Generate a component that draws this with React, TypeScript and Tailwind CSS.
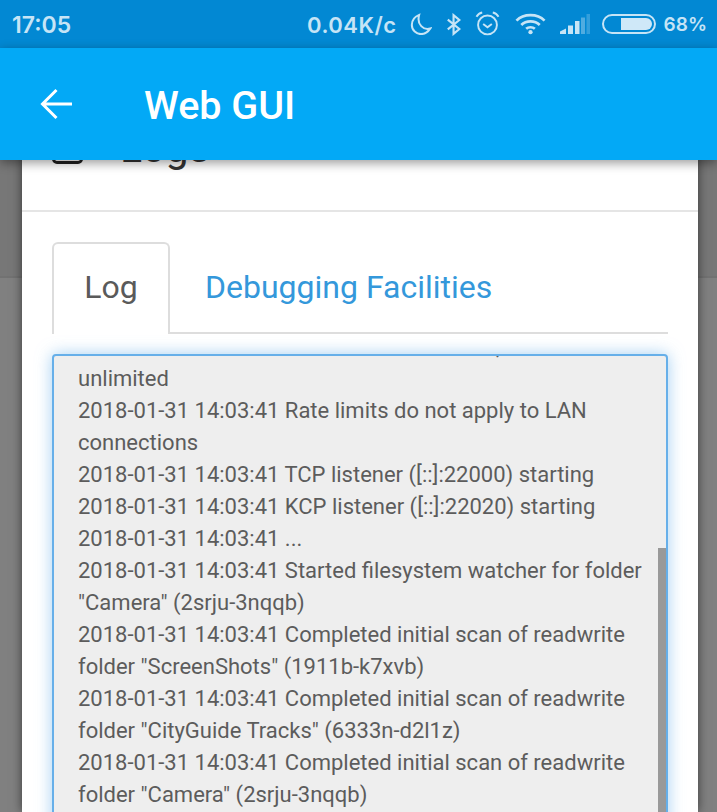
import React from 'react';

const logLines = [
  '2018-01-31 14:03:41 Send rate is unlimited, receive rate is unlimited',
  '2018-01-31 14:03:41 Rate limits do not apply to LAN connections',
  '2018-01-31 14:03:41 TCP listener ([::]:22000) starting',
  '2018-01-31 14:03:41 KCP listener ([::]:22020) starting',
  '2018-01-31 14:03:41 ...',
  '2018-01-31 14:03:41 Started filesystem watcher for folder "Camera" (2srju-3nqqb)',
  '2018-01-31 14:03:41 Completed initial scan of readwrite folder "ScreenShots" (1911b-k7xvb)',
  '2018-01-31 14:03:41 Completed initial scan of readwrite folder "CityGuide Tracks" (6333n-d2l1z)',
  '2018-01-31 14:03:41 Completed initial scan of readwrite folder "Camera" (2srju-3nqqb)',
  '2018-01-31 14:03:41 Device 5TS7LC7 client is "syncthing v0.14.43"',
];

const StatusIcons = () => (
  <div className="flex items-center text-[#c6e4f6]">
    <svg width="22" height="22" viewBox="0 0 24 24" fill="none" stroke="currentColor" strokeWidth="2.2" className="ml-[13px]">
      <path d="M10 2 C5 4 2 8 2 13 C2 19 7 23 12 23 C17 23 20 20 22 17 C15 19 7 13 10 2 Z" />
    </svg>
    <svg width="16" height="23" viewBox="0 0 18 24" fill="none" stroke="currentColor" strokeWidth="2.4" className="ml-[14px]">
      <path d="M2 6.5 L15 17 L8.5 22.5 V1.5 L15 7 L2 17.5" />
    </svg>
    <svg width="25" height="25" viewBox="0 0 26 26" fill="none" stroke="currentColor" strokeWidth="2" className="ml-[13px] mb-[2px]">
      <circle cx="13" cy="14.5" r="9.8" />
      <path d="M8.5 13.5 L13 17 L17.5 13.5" />
      <path d="M1.5 6 C3 3.5 5 2 7.5 1.5 M24.5 6 C23 3.5 21 2 18.5 1.5" />
    </svg>
    <svg width="31" height="22" viewBox="0 0 32 22" fill="none" stroke="currentColor" strokeWidth="2.8" className="ml-[15px]">
      <path d="M1.5 7.5 C9 0 23 0 30.5 7.5" />
      <path d="M6.5 12 C11.5 7 20.5 7 25.5 12" />
      <path d="M11.5 16 C14 13.8 18 13.8 20.5 16" />
      <circle cx="16" cy="19.5" r="2.2" fill="currentColor" stroke="none" />
    </svg>
    <svg width="30" height="20" viewBox="0 0 30 20" className="ml-[14px]" fill="currentColor">
      <path d="M0 20 V17.5 L6 14.5 V20 Z" />
      <rect x="8" y="11.5" width="5" height="8.5" />
      <rect x="15" y="7" width="4.5" height="13" />
      <rect x="21" y="3.5" width="4" height="16.5" opacity="0.4" />
      <rect x="26.5" y="0" width="3.5" height="20" opacity="0.25" />
    </svg>
    <div className="ml-[12px] flex h-[20px] w-[54px] justify-end rounded-full border-2 border-[#c6e4f6] p-[2px]">
      <div className="h-full w-[31px] rounded-r-full rounded-l-[2px] bg-[#cfe8f8]" />
    </div>
  </div>
);

export default function App() {
  return (
    <div className="flex h-[812px] w-[717px] flex-col overflow-hidden bg-[#808080] font-['Roboto',sans-serif]">
      <div className="relative z-20 flex h-[48px] shrink-0 items-center justify-between bg-[#0288d3] pl-[12px] pr-[10px] font-['Inter',sans-serif] font-semibold text-[#c6e4f6]">
        <span className="mt-[2px] text-[23px]">17:05</span>
        <div className="flex items-center">
          <span className="mt-[2px] text-[22px] tracking-[0.5px]">0.04K/c</span>
          <StatusIcons />
          <span className="ml-[8px] mt-[2px] text-[19px]">68%</span>
        </div>
      </div>

      <div className="relative z-20 flex h-[112px] shrink-0 items-center bg-[#03a9f6] pl-[40px] shadow-[0_3px_10px_rgba(0,0,0,0.4)]">
        <svg width="33" height="32" viewBox="0 0 33 32" fill="none" stroke="#ffffff" strokeWidth="3">
          <path d="M32 16 H3 M16.5 2 L2.5 16 L16.5 30" />
        </svg>
        <h1 className="ml-[71px] mt-[4px] text-[39.5px] font-medium text-white">Web GUI</h1>
      </div>

      <div className="relative min-h-0 flex-1 overflow-hidden">
        <div className="absolute inset-x-0 top-0 h-[118px] border-b-2 border-[#727272] bg-[#777777]" />
        <div className="absolute bottom-0 left-[22px] top-[-40px] w-[676px] bg-white shadow-[0_0_10px_rgba(0,0,0,0.55)]">
          <div className="flex h-[92px] items-start border-b-2 border-[#e5e5e5] pl-[30px]">
            <div className="mt-[4px] h-[40px] w-[31px] rounded-[5px] border-[3px] border-[#222222]" />
            <span className="ml-[37px] mt-[-2px] text-[41px] text-[#333333]">Logs</span>
          </div>

          <div className="px-[30px] pt-[30px]">
            <div className="flex h-[92px] border-b-2 border-[#dddddd]">
              <div className="mb-[-2px] flex h-[92px] w-[118px] items-center justify-center rounded-t-[6px] border-2 border-b-0 border-[#dddddd] bg-white pb-[4px] text-[32px] text-[#5a5a5a]">
                Log
              </div>
              <div className="ml-[35px] flex items-center text-[32px] text-[#3498db]">
                Debugging Facilities
              </div>
            </div>

            <div className="relative mt-[20px] h-[520px] overflow-hidden rounded-[4px] border-2 border-[#66afe9] bg-[#eeeeee] shadow-[0_0_16px_rgba(102,175,233,0.6)]">
              <div className="mt-[-25px] pl-[24px] pr-[20px] text-[22px] leading-[32px] text-[#5c5c5c]">
                {logLines.map((line) => (
                  <div key={line}>{line}</div>
                ))}
              </div>
              <div className="absolute bottom-0 right-0 top-[192px] w-[8px] bg-[#999999]" />
            </div>
          </div>
        </div>
      </div>
    </div>
  );
}
